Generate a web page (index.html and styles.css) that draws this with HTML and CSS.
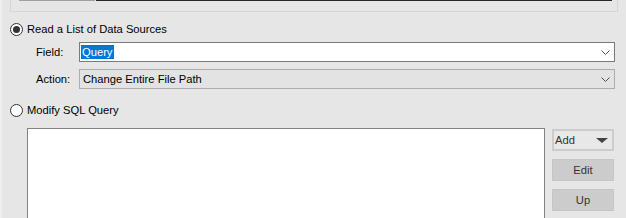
FILE: index.html
```html
<!DOCTYPE html>
<html>
<head>
<meta charset="utf-8">
<link rel="stylesheet" href="styles.css">
</head>
<body>
<div class="page">
  <div class="topgroup">
    <div class="bar-gray"></div>
    <div class="bar-dark"></div>
  </div>

  <div class="radio-row first">
    <span class="radio checked"><span class="dot"></span></span>
    <span class="radio-label">Read a List of Data Sources</span>
  </div>

  <div class="form-grid">
    <span class="label">Field:</span>
    <div class="combo editable">
      <span class="sel">Query</span>
      <svg class="chev" width="9" height="5" viewBox="0 0 9 5"><path d="M0.5 0.5 L4.5 4.5 L8.5 0.5" fill="none" stroke="#505050" stroke-width="1"/></svg>
    </div>
    <span class="label">Action:</span>
    <div class="combo readonly">
      <span class="val">Change Entire File Path</span>
      <svg class="chev" width="9" height="5" viewBox="0 0 9 5"><path d="M0.5 0.5 L4.5 4.5 L8.5 0.5" fill="none" stroke="#505050" stroke-width="1"/></svg>
    </div>
  </div>

  <div class="radio-row second">
    <span class="radio"></span>
    <span class="radio-label">Modify SQL Query</span>
  </div>

  <div class="sql-area">
    <div class="sql-box"></div>
    <div class="buttons">
      <div class="btn add"><span>Add</span><span class="tri"></span></div>
      <div class="btn">Edit</div>
      <div class="btn">Up</div>
    </div>
  </div>
</div>
</body>
</html>
```

FILE: styles.css
```css
html, body {
  margin: 0;
  padding: 0;
  background: #e6e6e6;
  font-family: "Liberation Sans", Arial, sans-serif;
  font-size: 11.2px;
  color: #000;
}

.page {
  width: 624px;
  height: 218px;
  border-left: 2px solid #efefef;
  overflow: hidden;
}

.topgroup {
  margin-left: 8px;
  width: 606px;
  height: 11px;
  border: 1px solid #d6d6d6;
  border-top: none;
  display: flex;
  align-items: flex-start;
}

.bar-gray {
  margin-left: 8px;
  width: 76px;
  height: 1px;
  background: #a0a0a0;
}

.bar-dark {
  margin-left: 1px;
  width: 516px;
  height: 1px;
  background: #262626;
}

.radio-row {
  display: flex;
  align-items: center;
  height: 14px;
  margin-left: 8px;
}

.radio-row.first { margin-top: 10px; }
.radio-row.second { margin-top: 14px; }

.radio {
  box-sizing: border-box;
  width: 13px;
  height: 13px;
  border: 1px solid #333;
  border-radius: 50%;
  background: #fff;
  display: flex;
  align-items: center;
  justify-content: center;
}

.radio .dot {
  width: 7px;
  height: 7px;
  border-radius: 50%;
  background: #333;
}

.radio-label {
  margin-left: 4px;
}

.form-grid {
  display: grid;
  grid-template-columns: 43px 536px;
  grid-auto-rows: 20px;
  row-gap: 7px;
  margin-top: 6px;
  margin-left: 34px;
  align-items: center;
}

.combo {
  box-sizing: border-box;
  height: 20px;
  display: flex;
  align-items: center;
  position: relative;
}

.combo.editable {
  background: #fff;
  border: 1px solid #7a7a7a;
  padding-left: 1px;
}

.combo.readonly {
  background: #e3e3e3;
  border: 1px solid #adadad;
  padding-left: 3px;
}

.sel {
  background: #0078d7;
  color: #fff;
  padding: 0 2px 0 1px;
  line-height: 14px;
}

.chev {
  position: absolute;
  right: 4px;
  top: 7px;
}

.sql-area {
  display: flex;
  margin-top: 11px;
  margin-left: 25px;
}

.sql-box {
  box-sizing: border-box;
  width: 518px;
  height: 100px;
  background: #fff;
  border: 1px solid #828282;
}

.buttons {
  margin-left: 7px;
  margin-top: 1px;
  display: flex;
  flex-direction: column;
  gap: 8px;
}

.btn {
  box-sizing: border-box;
  width: 62px;
  height: 22px;
  background: #cccccc;
  border: 1px solid #c6c6c6;
  display: flex;
  align-items: center;
  justify-content: center;
  color: #333;
}

.btn.add {
  background: #e8e8e8;
  border: 2px solid #cccccc;
  justify-content: space-between;
  padding: 0 4px 0 1px;
  color: #333;
}

.tri {
  width: 0;
  height: 0;
  border-left: 6px solid transparent;
  border-right: 6px solid transparent;
  border-top: 5px solid #444;
}
```
